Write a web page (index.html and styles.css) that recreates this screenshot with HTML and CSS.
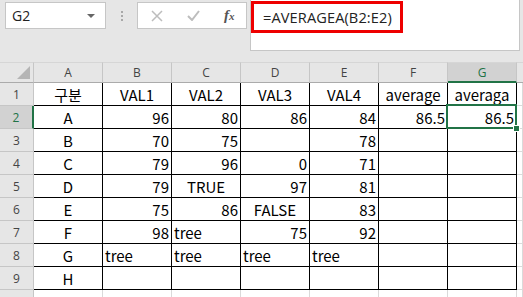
FILE: index.html
```html
<!DOCTYPE html>
<html lang="ko">
<head>
  <meta charset="UTF-8">
  <title>AVERAGEA</title>
  <link rel="stylesheet" href="styles.css">
</head>
<body>

  <!-- 이름 상자 + 수식 입력줄 -->
  <div class="bar">
    <div class="namebox">
      <span>G2</span>
      <span class="caret"></span>
    </div>
    <div class="grip"><i></i><i></i><i></i></div>
    <div class="fnbox">
      <svg width="12" height="12" viewBox="0 0 12 12"><path d="M1 1 L11 11 M11 1 L1 11" stroke="#bdbdbd" stroke-width="1.5" fill="none"/></svg>
      <svg width="13" height="11" viewBox="0 0 13 11"><path d="M1 6 L5 10 L12 1" stroke="#bdbdbd" stroke-width="2" fill="none"/></svg>
      <span class="fx">f<sub>x</sub></span>
    </div>
    <div class="formula">
      <span class="hl">=AVERAGEA(B2:E2)</span>
    </div>
  </div>

  <!-- 시트 -->
  <table class="sheet">
    <colgroup>
      <col class="w-head">
      <col class="w-col"><col class="w-col"><col class="w-col"><col class="w-col">
      <col class="w-col"><col class="w-col"><col class="w-col">
      <col>
    </colgroup>
    <tr class="hdr">
      <th class="corner"><span class="tri"></span></th>
      <th>A</th><th>B</th><th>C</th><th>D</th><th>E</th><th>F</th><th class="on">G</th><th class="rest"></th>
    </tr>
    <tr>
      <th>1</th>
      <td class="c">구분</td><td class="c">VAL1</td><td class="c">VAL2</td><td class="c">VAL3</td><td class="c">VAL4</td><td class="c">average</td><td class="c">averaga</td><td class="rest"></td>
    </tr>
    <tr>
      <th class="on">2</th>
      <td class="c">A</td><td class="n">96</td><td class="n">80</td><td class="n">86</td><td class="n">84</td><td class="n">86.5</td>
      <td class="n active">86.5<span class="sel"><span class="handle"></span></span></td><td class="rest"></td>
    </tr>
    <tr>
      <th>3</th>
      <td class="c">B</td><td class="n">70</td><td class="n">75</td><td></td><td class="n">78</td><td></td><td></td><td class="rest"></td>
    </tr>
    <tr>
      <th>4</th>
      <td class="c">C</td><td class="n">79</td><td class="n">96</td><td class="n">0</td><td class="n">71</td><td></td><td></td><td class="rest"></td>
    </tr>
    <tr>
      <th>5</th>
      <td class="c">D</td><td class="n">79</td><td class="c">TRUE</td><td class="n">97</td><td class="n">81</td><td></td><td></td><td class="rest"></td>
    </tr>
    <tr>
      <th>6</th>
      <td class="c">E</td><td class="n">75</td><td class="n">86</td><td class="c">FALSE</td><td class="n">83</td><td></td><td></td><td class="rest"></td>
    </tr>
    <tr>
      <th>7</th>
      <td class="c">F</td><td class="n">98</td><td class="t">tree</td><td class="n">75</td><td class="n">92</td><td></td><td></td><td class="rest"></td>
    </tr>
    <tr>
      <th>8</th>
      <td class="c">G</td><td class="t">tree</td><td class="t">tree</td><td class="t">tree</td><td class="t">tree</td><td></td><td></td><td class="rest"></td>
    </tr>
    <tr>
      <th>9</th>
      <td class="c">H</td><td></td><td></td><td></td><td></td><td></td><td></td><td class="rest"></td>
    </tr>
    <tr class="tail">
      <th></th>
      <td></td><td></td><td></td><td></td><td></td><td></td><td></td><td class="rest"></td>
    </tr>
  </table>

</body>
</html>
```

FILE: styles.css
```css
* {
  margin: 0;
  padding: 0;
  box-sizing: border-box;
}

html, body {
  width: 523px;
  height: 297px;
  overflow: hidden;
  background: #e6e6e6;
  font-family: "Noto Sans CJK KR", "Noto Sans", sans-serif;
  color: #000;
}

/* ---- 수식 입력줄 ---- */
.bar {
  height: 62px;
  display: flex;
  align-items: flex-start;
  padding-left: 5px;
}

.namebox {
  margin-top: 2px;
  width: 101px;
  height: 27px;
  background: #fff;
  border: 1px solid #c6c6c6;
  display: flex;
  align-items: center;
  justify-content: space-between;
  padding: 0 10px 0 6px;
  font-family: "Open Sans", sans-serif;
  font-size: 14px;
  color: #222;
}

.caret {
  width: 0;
  height: 0;
  border-left: 4px solid transparent;
  border-right: 4px solid transparent;
  border-top: 4px solid #666;
}

.grip {
  width: 31px;
  height: 31px;
  display: flex;
  flex-direction: column;
  align-items: center;
  justify-content: center;
  gap: 2px;
}

.grip i {
  width: 2px;
  height: 2px;
  background: #a8a8a8;
}

.fnbox {
  margin-top: 2px;
  width: 110px;
  height: 27px;
  background: #fff;
  border: 1px solid #c6c6c6;
  display: flex;
  align-items: center;
  padding-left: 13px;
  gap: 24px;
}

.fx {
  font-family: "Liberation Serif", serif;
  font-style: italic;
  font-weight: bold;
  font-size: 15px;
  color: #555;
}

.fx sub {
  font-size: 11px;
  vertical-align: 0;
}

.formula {
  margin-left: 3px;
  width: 270px;
  height: 51px;
  background: #fff;
  border: 1px solid #c6c6c6;
  border-top: none;
}

.hl {
  display: inline-block;
  margin-top: 1px;
  height: 32px;
  width: 152px;
  border: 3px solid #ee0000;
  padding-left: 9px;
  line-height: 26px;
  font-family: "Open Sans", sans-serif;
  font-size: 14.6px;
  letter-spacing: 0.1px;
  color: #222;
}

/* ---- 시트 ---- */
.sheet {
  border-collapse: separate;
  border-spacing: 0;
  table-layout: fixed;
  width: 523px;
  background: #fff;
}

.w-head { width: 34px; }
.w-col { width: 69px; }

.sheet th {
  background: #e6e6e6;
  font-weight: 400;
  font-family: "Open Sans", sans-serif;
  font-size: 12px;
  color: #444;
  border-right: 1px solid #c6c6c6;
  border-bottom: 1px solid #c6c6c6;
  text-align: center;
  padding: 0;
}

.sheet tr {
  height: 23px;
}

.sheet tr.hdr {
  height: 21px;
}

.sheet tr.hdr th {
  border-top: 1px solid #d6d6d6;
  border-bottom-color: #ababab;
}

.sheet th.on {
  background: #d2d2d2;
  color: #217346;
}

.sheet tr.hdr th.on {
  border-bottom: 2px solid #217346;
}

.sheet tr:not(.hdr) th.on {
  border-right: 2px solid #217346;
}

.corner {
  position: relative;
}

.tri {
  position: absolute;
  right: 3px;
  bottom: 3px;
  width: 0;
  height: 0;
  border-left: 13px solid transparent;
  border-bottom: 13px solid #b5b5b5;
}

.sheet td {
  border-right: 1px solid #000;
  border-bottom: 1px solid #000;
  font-size: 15px;
  line-height: 20px;
  padding: 1px 2px 0;
  white-space: nowrap;
  overflow: visible;
}

.sheet td.c { text-align: center; }
.sheet td.n { text-align: right; }
.sheet td.t { text-align: left; padding-left: 2px; }

.sheet td.rest,
.sheet tr.tail td {
  border-right-color: #dadada;
  border-bottom-color: #dadada;
}

.sheet tr.tail {
  height: 8px;
}

.sheet th.rest {
  border-right: none;
}

.active {
  position: relative;
}

.sel {
  position: absolute;
  top: -2px;
  left: -2px;
  right: -1px;
  bottom: -1px;
  border: 2px solid #217346;
}

.handle {
  position: absolute;
  right: -5px;
  bottom: -5px;
  width: 7px;
  height: 7px;
  background: #217346;
  border: 1px solid #fff;
}
```
